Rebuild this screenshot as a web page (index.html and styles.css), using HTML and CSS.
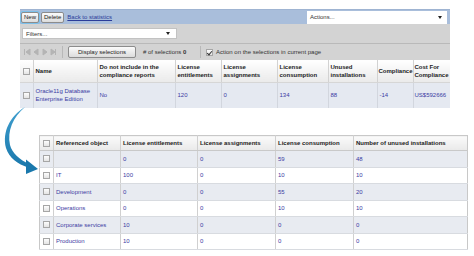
FILE: index.html
```html
<!DOCTYPE html>
<html>
<head>
<meta charset="utf-8">
<link rel="stylesheet" href="styles.css">
</head>
<body>
<div class="page">
  <div class="panel">
    <div class="topbar">
      <div class="left">
        <button class="btn focus">New</button>
        <button class="btn">Delete</button>
        <a class="link" href="#">Back to statistics</a>
      </div>
      <div class="select actions"><span>Actions...</span><i class="tri"></i></div>
    </div>
    <div class="filterbar">
      <div class="select filters"><span>Filters...</span><i class="tri"></i></div>
    </div>
    <div class="pager">
      <div class="pgicons">
        <svg width="34" height="8" viewBox="0 0 34 8">
          <g fill="#b4b4b4" stroke="#b4b4b4" stroke-width="1">
            <line x1="1.5" y1="1" x2="1.5" y2="7"/>
            <polygon points="7,1 3,4 7,7" />
            <polygon points="15,1 11,4 15,7" />
            <polygon points="20,1 24,4 20,7" />
            <polygon points="28,1 32,4 28,7" />
            <line x1="32.5" y1="1" x2="32.5" y2="7"/>
          </g>
        </svg>
      </div>
      <span class="sep"></span>
      <button class="btn disp">Display selections</button>
      <span class="nsel"># of selections <b>0</b></span>
      <span class="sep"></span>
      <span class="cb checked"></span>
      <span class="act">Action on the selections in current page</span>
    </div>
    <table class="t1">
      <colgroup>
        <col style="width:13px"><col style="width:64px"><col style="width:78px"><col style="width:46px"><col style="width:56px"><col style="width:51px"><col style="width:49px"><col style="width:36px"><col style="width:37px">
      </colgroup>
      <thead>
        <tr>
          <th class="cbc"><span class="cb"></span></th>
          <th>Name</th>
          <th>Do not include in the<br>compliance reports</th>
          <th>License<br>entitlements</th>
          <th>License<br>assignments</th>
          <th>License<br>consumption</th>
          <th>Unused<br>installations</th>
          <th class="tight">Compliance</th>
          <th class="tight">Cost For<br>Compliance</th>
        </tr>
      </thead>
      <tbody>
        <tr>
          <td class="cbc"><span class="cb"></span></td>
          <td>Oracle11g Database<br>Enterprise Edition</td>
          <td>No</td>
          <td>120</td>
          <td>0</td>
          <td>134</td>
          <td>88</td>
          <td>-14</td>
          <td class="tight">US$592666</td>
        </tr>
      </tbody>
    </table>
  </div>

  <table class="t2">
    <colgroup>
      <col style="width:14px"><col style="width:67px"><col style="width:77px"><col style="width:78px"><col style="width:78px"><col style="width:114px">
    </colgroup>
    <thead>
      <tr>
        <th class="cbc"><span class="cb"></span></th>
        <th>Referenced object</th>
        <th>License entitlements</th>
        <th>License assignments</th>
        <th>License consumption</th>
        <th>Number of unused installations</th>
      </tr>
    </thead>
    <tbody>
      <tr><td class="cbc"><span class="cb"></span></td><td></td><td>0</td><td>0</td><td>59</td><td>48</td></tr>
      <tr><td class="cbc"><span class="cb"></span></td><td>IT</td><td>100</td><td>0</td><td>10</td><td>10</td></tr>
      <tr><td class="cbc"><span class="cb"></span></td><td>Development</td><td>0</td><td>0</td><td>55</td><td>20</td></tr>
      <tr><td class="cbc"><span class="cb"></span></td><td>Operations</td><td>0</td><td>0</td><td>10</td><td>10</td></tr>
      <tr><td class="cbc"><span class="cb"></span></td><td>Corporate services</td><td>10</td><td>0</td><td>0</td><td>0</td></tr>
      <tr><td class="cbc"><span class="cb"></span></td><td>Production</td><td>10</td><td>0</td><td>0</td><td>0</td></tr>
    </tbody>
  </table>

  <svg class="arrow" width="50" height="80" viewBox="0 100 50 80">
    <defs>
      <linearGradient id="ag" x1="0" y1="0" x2="0" y2="1">
        <stop offset="0" stop-color="#3f9fcf"/>
        <stop offset="1" stop-color="#1a78ac"/>
      </linearGradient>
    </defs>
    <path d="M25,107 C10,116 2,132 6,148 C9,158 18,164 28,167.5 L29,164 C20,160 12,153 10,145 C7,131 13,117 25,107 Z" fill="url(#ag)"/>
    <polygon points="38,169 26,159.5 26,174" fill="#1a78ac"/>
  </svg>
</div>
</body>
</html>
```

FILE: styles.css
```css
* { box-sizing: border-box; }
html, body { margin: 0; padding: 0; background: #fff; }
body {
  font-family: "Liberation Sans", Arial, sans-serif;
  font-size: 6px;
  color: #222;
}
.page {
  position: relative;
  width: 474px;
  height: 256px;
  padding: 9px 0 0 20px;
}
.panel { width: 430px; }

.topbar {
  height: 15px;
  background: #a9bedb;
  border-top: 1px solid #9fb4d2;
  display: flex;
  align-items: center;
  justify-content: space-between;
}
.topbar .left { display: flex; align-items: center; gap: 2px; padding-left: 1px; }
.btn {
  font-family: "Liberation Sans", Arial, sans-serif;
  font-size: 6px;
  color: #222;
  height: 11px;
  line-height: 9px;
  padding: 0 2px;
  margin: 0;
  border: 1px solid #8c8c8c;
  border-radius: 2px;
  background: linear-gradient(#fbfbfb, #dcdcdc);
}
.btn.focus { box-shadow: 0 0 0 1px #7cc0ea; }
.link {
  color: #2b3d9a;
  text-decoration: underline;
  margin-left: 1px;
  font-size: 6px;
}
.select {
  background: #fff;
  display: flex;
  align-items: center;
  justify-content: space-between;
  padding: 0 5px 0 3px;
  color: #333;
}
.tri {
  width: 0; height: 0;
  border-left: 2px solid transparent;
  border-right: 2px solid transparent;
  border-top: 3px solid #222;
}
.actions { width: 140px; height: 13px; margin-right: 3px; }

.filterbar {
  height: 20px;
  background: #d3d3d3;
  display: flex;
  align-items: center;
  padding-left: 2px;
  border-bottom: 1px solid #b9b9b9;
}
.filters { width: 155px; height: 11px; border: 1px solid #c2c2c2; padding-right: 6px; }

.pager {
  height: 16px;
  background: #d3d3d3;
  display: flex;
  align-items: center;
  color: #333;
}
.pgicons { width: 42px; padding-left: 3px; display: flex; }
.sep { width: 1px; height: 12px; background: #b8b8b8; }
.disp { margin-left: 5px; height: 12px; width: 68px; }
.nsel { margin-left: 7px; width: 57px; }
.nsel b { font-weight: bold; }
.act { margin-left: 3px; }
.pager .cb { margin-left: 5px; }

.cb {
  display: inline-block;
  width: 7px;
  height: 7px;
  border: 1px solid #a6a6a6;
  background: linear-gradient(#fdfdfd, #e4e4e4);
  position: relative;
  vertical-align: middle;
}
.cb.checked::after {
  content: "";
  position: absolute;
  left: 1px; top: 0px;
  width: 2px; height: 4px;
  border-right: 1px solid #333;
  border-bottom: 1px solid #333;
  transform: rotate(40deg);
}

table { border-collapse: collapse; table-layout: fixed; }
th, td { padding: 0 2px; text-align: left; white-space: nowrap; overflow: visible; }
th { font-weight: bold; color: #222; }
td { color: #3b3ba3; }
.cbc { padding: 0 0 0 3px; }
.tight { padding: 0 1px; }

.t1 { width: 430px; }
.t1 th {
  height: 22px;
  line-height: 8px;
  background: linear-gradient(#ffffff, #eaeaea);
  border-left: 1px solid #d2d2d2;
  border-bottom: 1px solid #d6d6d6;
  vertical-align: middle;
}
.t1 td {
  height: 26px;
  line-height: 8px;
  background: #e5e9f1;
  border-left: 1px solid #d2d6de;
  vertical-align: middle;
}
.t1 th:first-child, .t1 td:first-child { border-left: none; }

.t2 {
  width: 428px;
  margin: 27px 0 0 19px;
  border: 1px solid #c8c8c8;
}
.t2 th {
  height: 15px;
  background: linear-gradient(#fafafa, #e9e9e9);
  border-left: 1px solid #d0d0d0;
  border-bottom: 1px solid #c9c9c9;
}
.t2 td {
  height: 16.5px;
  border-left: 1px solid #d0d0d0;
  border-bottom: 1px solid #d8dbe0;
}
.t2 tbody tr:nth-child(odd) td { background: #e8ebf1; }
.t2 tbody tr:nth-child(even) td { background: #ffffff; }
.t2 th:first-child, .t2 td:first-child { border-left: none; }

.arrow { position: absolute; left: 0; top: 100px; }
```
